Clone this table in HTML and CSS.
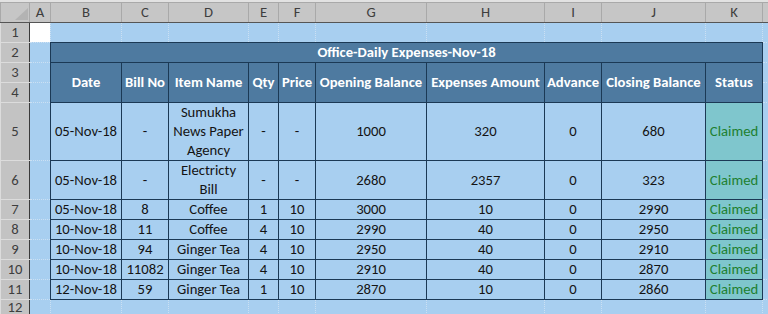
FILE: index.html
```html
<!DOCTYPE html>
<html lang="en">
<head>
<meta charset="utf-8">
<title>Office-Daily Expenses-Nov-18</title>
<link rel="stylesheet" href="styles.css">
</head>
<body>
<div class="topbar"></div>
<table class="sheet">
  <colgroup>
    <col class="w-rh"><col class="w-a"><col class="w-b"><col class="w-c"><col class="w-d"><col class="w-e"><col class="w-f"><col class="w-g"><col class="w-h"><col class="w-i"><col class="w-j"><col class="w-k"><col class="w-l">
  </colgroup>
  <tr class="colhead">
    <th class="corner"><svg class="corner-tri" width="27" height="18" viewBox="0 0 27 18"><polygon points="13,16 26,16 26,4" fill="#b3b3b3"/></svg></th>
    <th>A</th><th>B</th><th>C</th><th>D</th><th>E</th><th>F</th><th>G</th><th>H</th><th>I</th><th>J</th><th>K</th><th></th>
  </tr>
  <tr class="r-s">
    <th class="rh">1</th><td class="sel"></td><td></td><td></td><td></td><td></td><td></td><td></td><td></td><td></td><td></td><td></td><td></td>
  </tr>
  <tr class="r-m">
    <th class="rh">2</th><td></td><td class="title" colspan="10">Office-Daily Expenses-Nov-18</td><td></td>
  </tr>
  <tr class="r-s">
    <th class="rh">3</th><td></td>
    <td class="hd" rowspan="2">Date</td>
    <td class="hd" rowspan="2">Bill No</td>
    <td class="hd" rowspan="2">Item Name</td>
    <td class="hd" rowspan="2">Qty</td>
    <td class="hd" rowspan="2">Price</td>
    <td class="hd" rowspan="2">Opening Balance</td>
    <td class="hd" rowspan="2">Expenses Amount</td>
    <td class="hd" rowspan="2">Advance</td>
    <td class="hd" rowspan="2">Closing Balance</td>
    <td class="hd" rowspan="2">Status</td>
    <td></td>
  </tr>
  <tr class="r-m">
    <th class="rh">4</th><td></td><td></td>
  </tr>
  <tr class="r-5">
    <th class="rh">5</th><td></td>
    <td class="d">05-Nov-18</td><td class="d">-</td><td class="d">Sumukha<br>News Paper<br>Agency</td><td class="d">-</td><td class="d">-</td><td class="d">1000</td><td class="d">320</td><td class="d">0</td><td class="d">680</td><td class="d st">Claimed</td>
    <td></td>
  </tr>
  <tr class="r-6">
    <th class="rh">6</th><td></td>
    <td class="d">05-Nov-18</td><td class="d">-</td><td class="d">Electricty<br>Bill</td><td class="d">-</td><td class="d">-</td><td class="d">2680</td><td class="d">2357</td><td class="d">0</td><td class="d">323</td><td class="d st">Claimed</td>
    <td></td>
  </tr>
  <tr class="r-m">
    <th class="rh">7</th><td></td>
    <td class="d">05-Nov-18</td><td class="d">8</td><td class="d">Coffee</td><td class="d">1</td><td class="d">10</td><td class="d">3000</td><td class="d">10</td><td class="d">0</td><td class="d">2990</td><td class="d st">Claimed</td>
    <td></td>
  </tr>
  <tr class="r-m">
    <th class="rh">8</th><td></td>
    <td class="d">10-Nov-18</td><td class="d">11</td><td class="d">Coffee</td><td class="d">4</td><td class="d">10</td><td class="d">2990</td><td class="d">40</td><td class="d">0</td><td class="d">2950</td><td class="d st">Claimed</td>
    <td></td>
  </tr>
  <tr class="r-s">
    <th class="rh">9</th><td></td>
    <td class="d">10-Nov-18</td><td class="d">94</td><td class="d">Ginger Tea</td><td class="d">4</td><td class="d">10</td><td class="d">2950</td><td class="d">40</td><td class="d">0</td><td class="d">2910</td><td class="d st">Claimed</td>
    <td></td>
  </tr>
  <tr class="r-s">
    <th class="rh">10</th><td></td>
    <td class="d">10-Nov-18</td><td class="d">11082</td><td class="d">Ginger Tea</td><td class="d">4</td><td class="d">10</td><td class="d">2910</td><td class="d">40</td><td class="d">0</td><td class="d">2870</td><td class="d st">Claimed</td>
    <td></td>
  </tr>
  <tr class="r-m">
    <th class="rh">11</th><td></td>
    <td class="d">12-Nov-18</td><td class="d">59</td><td class="d">Ginger Tea</td><td class="d">1</td><td class="d">10</td><td class="d">2870</td><td class="d">10</td><td class="d">0</td><td class="d">2860</td><td class="d st">Claimed</td>
    <td></td>
  </tr>
  <tr class="r-last">
    <th class="rh rh-last">12</th><td></td><td></td><td></td><td></td><td></td><td></td><td></td><td></td><td></td><td></td><td></td><td></td>
  </tr>
</table>
</body>
</html>
```

FILE: styles.css
```css
html, body {
  margin: 0;
  padding: 0;
  overflow: hidden;
  background: #a8cff0;
}

body {
  width: 768px;
  height: 314px;
  font-family: Carlito, Lato, "Liberation Sans", sans-serif;
}

.topbar {
  height: 2px;
  background: #e2e2e2;
}

.sheet {
  border-collapse: collapse;
  table-layout: fixed;
  width: 782px;
  font-size: 14.67px;
  color: #141414;
}

.w-rh { width: 29px; }
.w-a { width: 21px; }
.w-b { width: 71px; }
.w-c { width: 47px; }
.w-d { width: 80px; }
.w-e { width: 30px; }
.w-f { width: 37px; }
.w-g { width: 111px; }
.w-h { width: 118px; }
.w-i { width: 57px; }
.w-j { width: 104px; }
.w-k { width: 57px; }
.w-l { width: 20px; }

.sheet td,
.sheet th {
  padding: 0 1px;
  text-align: center;
  vertical-align: middle;
  overflow: hidden;
  line-height: 19px;
}

.sheet td {
  border: 1px dotted #cbe0f3;
  background: #a8cff0;
}

.colhead th {
  height: 18px;
  background: #c6c6c6;
  color: #3e3e3e;
  font-weight: normal;
  border: 1px solid #a9a9a9;
  border-bottom: 1px solid #555555;
}

.corner {
  padding: 0;
}

.corner-tri {
  display: block;
}

.rh {
  background: #c3c3c3;
  color: #3e3e3e;
  font-weight: normal;
  border: 1px solid #dcdcdc;
  border-right: 1px solid #3a3a3a;
  vertical-align: bottom;
}

.sheet th.rh-last {
  vertical-align: top;
  line-height: 13px;
  padding-top: 1px;
}

.r-s { height: 19px; }
.r-m { height: 20px; }
.r-5 { height: 58px; }
.r-6 { height: 38px; }
.r-last { height: 14px; }

.sheet td.sel {
  background: #ffffff;
}

.sheet td.title {
  background: #4e7aa0;
  color: #ffffff;
  font-weight: bold;
  border: 1px solid #1b3955;
}

.sheet td.hd {
  background: #4e7aa0;
  color: #ffffff;
  font-weight: bold;
  border: 1px solid #1b3955;
}

.sheet td.d {
  border: 1px solid #1b3955;
}

.sheet td.st {
  background: #7fc6cd;
  color: #1e8030;
}
```
